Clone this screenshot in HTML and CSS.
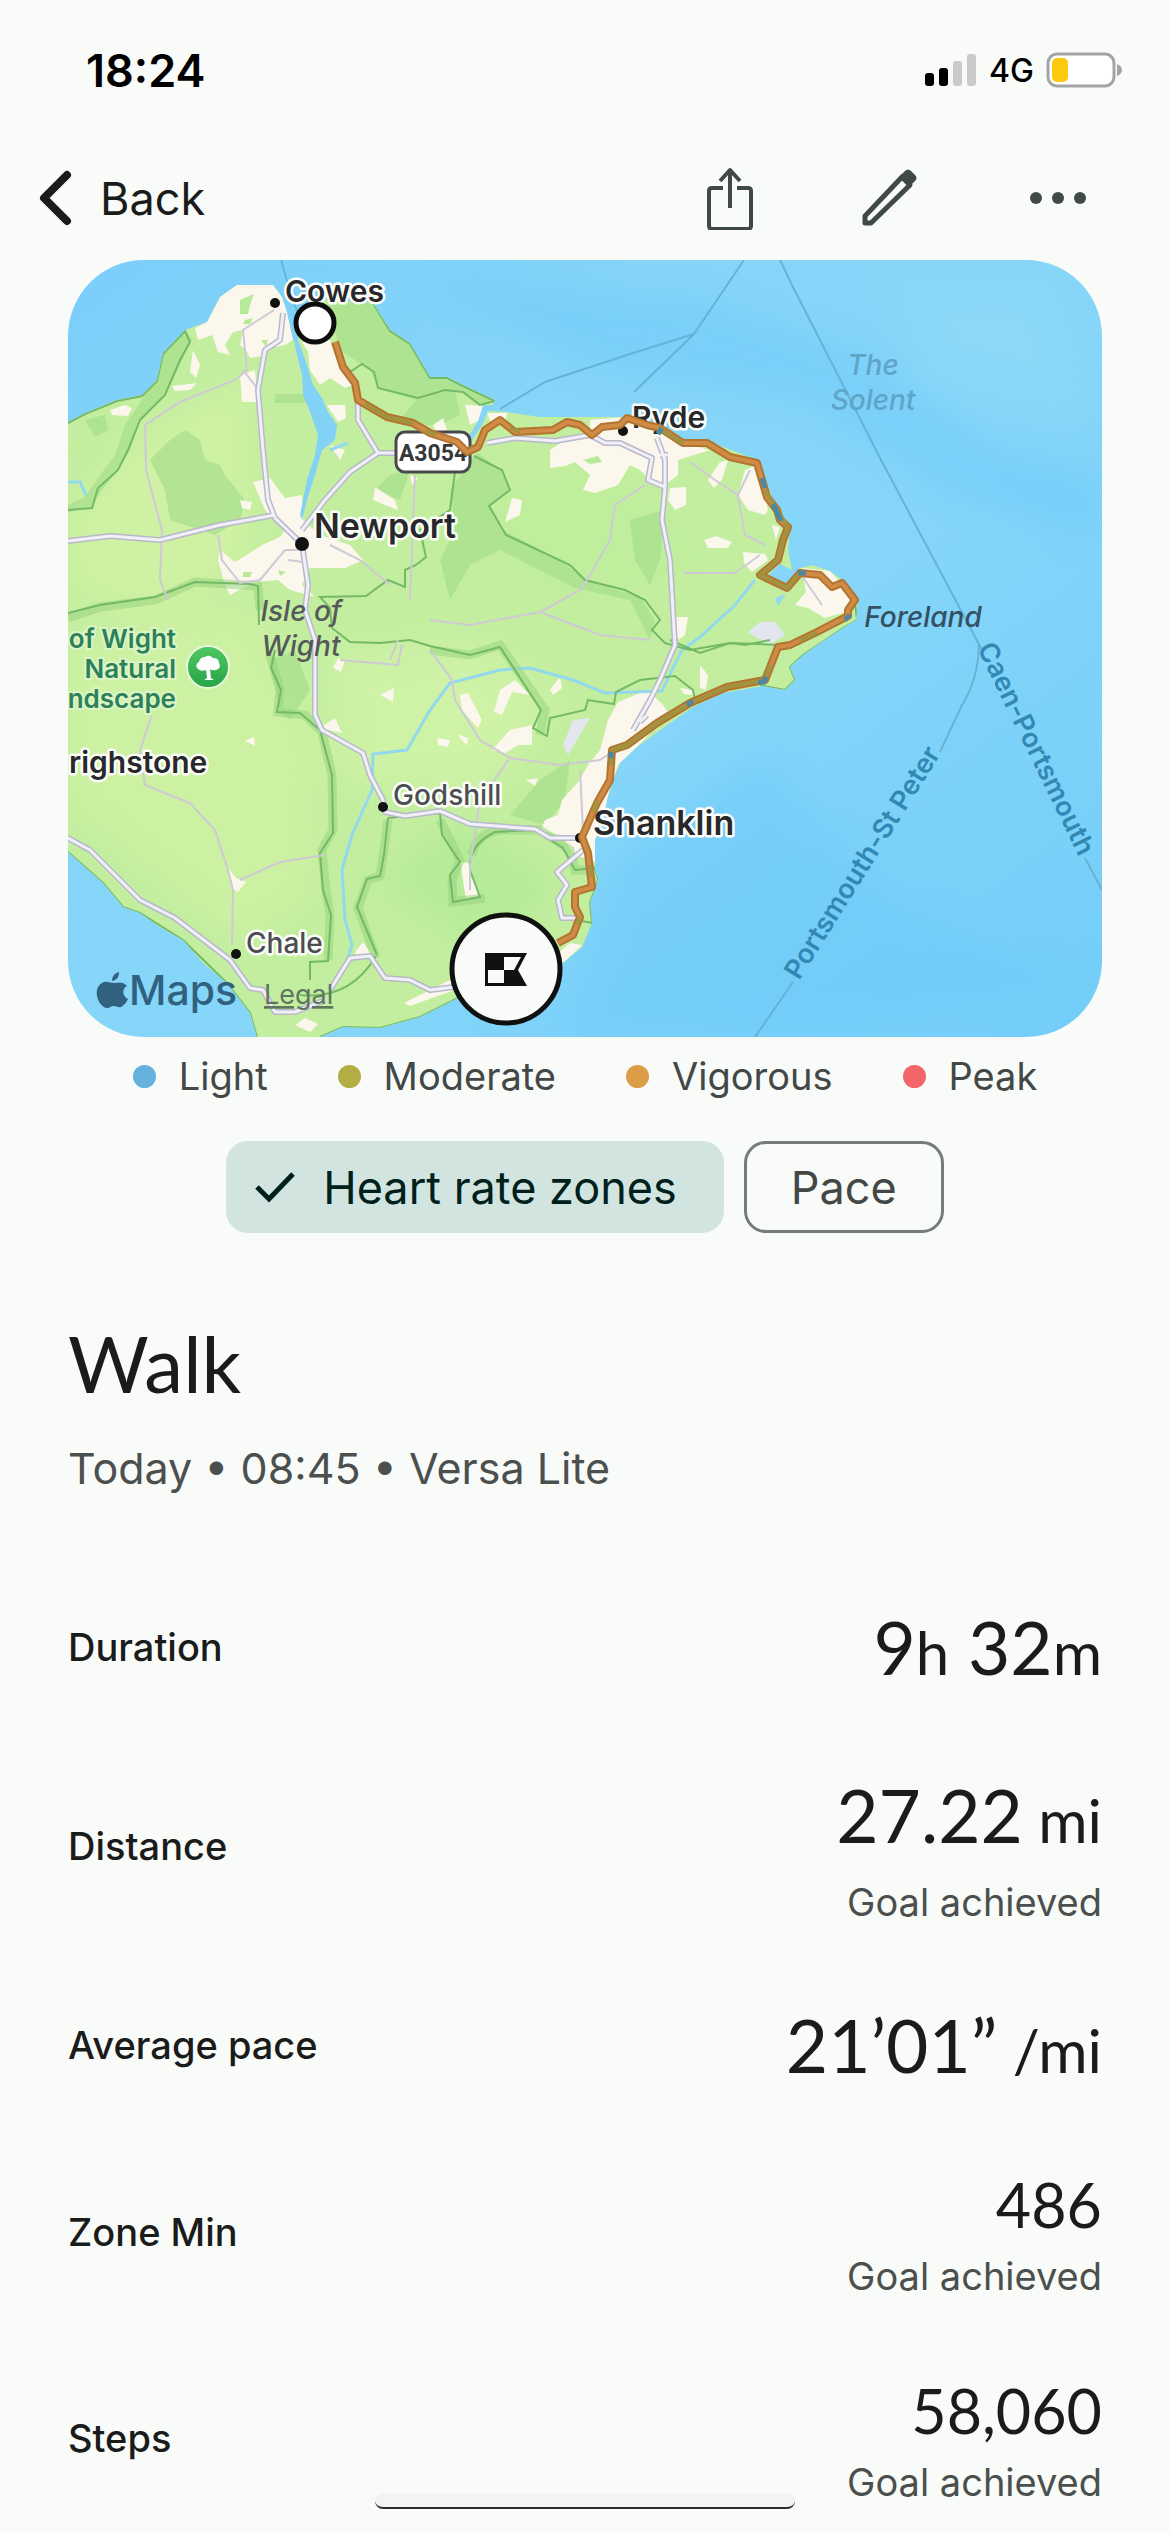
FILE: index.html
```html
<!DOCTYPE html>
<html lang="en">
<head>
    <meta charset="UTF-8">
    <meta name="viewport" content="width=device-width, initial-scale=1.0">
    <title>Walk</title>
    <link rel="stylesheet" href="styles.css">
</head>
<body>

<div class="status-bar">
    <span class="time">18:24</span>
    <div class="status-icons">
        <svg class="signal" viewBox="0 0 52 34" width="52" height="34">
            <rect x="0" y="20" width="9" height="13" rx="3"/>
            <rect x="14" y="15" width="9" height="18" rx="3"/>
            <rect x="28" y="8" width="9" height="25" rx="3" fill="#c9cbc9"/>
            <rect x="42" y="1" width="9" height="32" rx="3" fill="#c9cbc9"/>
        </svg>
        <span class="network">4G</span>
        <svg class="battery" viewBox="0 0 76 36" width="76" height="36">
            <rect x="2" y="2" width="66" height="32" rx="9" fill="#fff" stroke="#a3a5a3" stroke-width="3"/>
            <rect x="6" y="6" width="16" height="24" rx="5" fill="#fcc90c"/>
            <path d="M71 12q5 2 5 6t-5 6z" fill="#a3a5a3"/>
        </svg>
    </div>
</div>

<header class="nav-bar">
    <button class="back-btn">
        <svg viewBox="0 0 34 56" width="34" height="56" fill="none" stroke="#1a1c1b" stroke-width="8" stroke-linecap="round" stroke-linejoin="round">
            <path d="M29 5L6 28l23 23"/>
        </svg>
        Back
    </button>
    <div class="nav-actions">
        <button class="icon-btn" aria-label="Share">
            <svg viewBox="0 0 64 64" width="64" height="64" fill="none" stroke="#3f4947" stroke-width="4" stroke-linejoin="round">
                <path d="M25 22H14q-3 0-3 3v35q0 3 3 3h36q3 0 3-3V25q0-3-3-3H39"/>
                <path d="M32 42V5M22 15L32 4l10 11"/>
            </svg>
        </button>
        <button class="icon-btn" aria-label="Edit">
            <svg viewBox="6 0 64 64" width="64" height="64">
                <path d="M9 50L46 11l8 8L15 57H9z" fill="none" stroke="#3f4947" stroke-width="5" stroke-linejoin="round"/>
                <path d="M43 11l6-6q3-3 6 0l4 4q3 3 0 6l-6 6z" fill="#3f4947"/>
            </svg>
        </button>
        <button class="icon-btn" aria-label="More">
            <svg viewBox="0 0 64 64" width="64" height="64" fill="#3f4947">
                <circle cx="10" cy="32" r="6"/>
                <circle cx="32" cy="32" r="6"/>
                <circle cx="54" cy="32" r="6"/>
            </svg>
        </button>
    </div>
</header>

<main class="content">
    <div class="map">
        <svg viewBox="68 260 1034 777">
            <defs>
                <linearGradient id="sea" x1="0" y1="0" x2="1" y2="1">
                    <stop offset="0" stop-color="#7acefa"/>
                    <stop offset="0.3" stop-color="#86d5f8"/>
                    <stop offset="0.55" stop-color="#86d6f9"/>
                    <stop offset="1" stop-color="#73cdf9"/>
                </linearGradient>
                <linearGradient id="park" x1="0" y1="0" x2="0" y2="1">
                    <stop offset="0" stop-color="#4fc964"/>
                    <stop offset="1" stop-color="#26a345"/>
                </linearGradient>
                <filter id="soft" x="-20%" y="-20%" width="140%" height="140%">
                    <feGaussianBlur stdDeviation="16"/>
                </filter>
                <path id="land" d="M68 422L85 413L117 400L142 395L157 380L163 353L185 330L207 322L220 297L237 285L273 285L282 297L287 313L293 340L299 346L296 320L310 303L327 300L373 303L390 330L410 343L430 377L447 377L463 385L495 400L493 405L483 405L478 421L468 438L472 440L482 425L488 411L507 412L540 417L573 417L617 417L647 420L663 430L683 439L713 443L757 460L767 483L778 513L790 527L788 550L792 570L780 564L767 576L787 584L800 568L812 565L830 571L845 582L858 600L856 620L843 628L820 643L803 655L790 667L795 680L785 690L763 686L723 693L693 707L663 728L637 747L620 763L612 783L607 800L603 820L595 840L595 870L598 880L590 903L592 923L582 947L563 963L500 985L460 997L420 1017L380 1028L343 1027L320 1037L257 1037L250 1013L227 983L203 963L183 940L160 927L140 913L123 907L103 883L68 852Z"/>
                <clipPath id="land-clip"><use href="#land"/></clipPath>
            </defs>

            <!-- sea -->
            <rect x="68" y="260" width="1034" height="777" fill="url(#sea)"/>
            <g filter="url(#soft)" opacity="0.4">
                <path d="M420 280L700 300L860 350L1000 450L1102 480V540L940 490L800 400L600 370Z" fill="#6ac8fb"/>
                <path d="M620 860L760 760L900 900L1060 980L820 1037H560Z" fill="#6ac8fb"/>
                <path d="M880 270L1060 280L1090 420L930 380Z" fill="#93dcf6"/>
            </g>

            <!-- ferry lines -->
            <g fill="none" stroke="#66b3d6" stroke-width="2">
                <path d="M744 260L694 334L634 392M694 334L630 354L545 382L500 409"/>
                <path d="M780 260L792 285L880 458L982 650M1085 858L1102 890"/>
                <path d="M979 645Q978 680 962 705L940 752M793 982L755 1037"/>
                <path d="M281 260L288 284L300 320"/>
            </g>

            <!-- land -->
            <use href="#land" fill="#c3ee9f"/>
            <g clip-path="url(#land-clip)">
                <g filter="url(#soft)">
                    <path d="M68 520L130 440L250 380V560L160 620L68 590Z" fill="#cff1a3"/>
                    <path d="M68 640L250 600L320 740L310 900L240 940L68 800Z" fill="#cdf1a2"/>
                    <path d="M330 650L480 640L560 700L480 800L340 780Z" fill="#cef2a6"/>
                    <path d="M480 500L600 460L720 560L560 600Z" fill="#bfee9c"/>
                    <path d="M380 880L460 820L560 880L500 960Z" fill="#b5eb99"/>
                </g>

                <!-- woods and downs -->
                <g fill="#a3de8b" opacity="0.65">
                    <path d="M163 353L185 330L192 340L180 365L165 395L140 420L130 450L118 470L102 490L90 508L68 512V505L85 497L100 475L115 455L125 425L142 400Z"/>
                    <path d="M327 300L373 303L390 330L410 343L430 377L460 382L495 402L480 404L460 390L440 390L415 400L378 388L370 370L340 350Z"/>
                    <path d="M150 460L170 440L185 430L200 440L205 460L220 465L225 475L245 500L240 520L215 535L170 520L165 490Z"/>
                    <path d="M400 420L420 395L455 390L460 415L440 425L425 425Z"/>
                    <path d="M275 394L305 394V403H275Z"/>
                    <path d="M477 452L500 470L510 490L490 505L503 530L560 560L585 580L640 597L655 620L650 640L630 600L575 588L500 550L470 565L450 600L440 560L455 530L450 490Z"/>
                    <path d="M630 520L665 510L660 560L650 585L635 560Z"/>
                    <path d="M390 475L410 470L400 500L375 490Z"/>
                    <path d="M85 420L105 415L108 430L95 437Z"/>
                    <path d="M540 780L570 760L565 800L545 825L510 815Z"/>
                    <path d="M270 660L295 650L310 690L290 720L280 710Z"/>
                </g>

                <!-- built-up areas -->
                <g fill="#fbf7ec">
                    <path d="M207 322L220 297L237 283L273 283L290 310L293 340L285 345L270 348L262 356L250 358L246 350L240 345L243 330L233 332L225 345L230 355L218 352L212 335L198 340L195 328Z"/>
                    <path d="M302 342L330 340L340 365L352 385L345 388L330 378L320 385L310 370L308 352Z"/>
                    <path d="M327 405L345 405L346 418L338 422Z"/>
                    <path d="M240 375L255 370L258 402L242 402Z"/>
                    <path d="M193 350L200 365L196 378L190 372Z"/>
                    <path d="M172 386L197 383L190 390L175 391Z"/>
                    <path d="M110 410L125 405L132 408L128 416L112 415Z"/>
                    <path d="M253 482L270 478L285 498L302 495L303 520L320 535L350 545L363 560L345 568L310 568L302 585L315 597L290 590L278 580L255 582L230 595L225 585L218 560L220 550L235 562L245 556L262 545L280 537L285 530L265 510Z"/>
                    <path d="M240 500L252 502L250 510L242 508Z"/>
                    <path d="M375 487L395 500L398 510L385 505L373 500Z"/>
                    <path d="M433 425L443 418L447 430L437 434Z"/>
                    <path d="M410 475L418 478L412 485Z"/>
                    <path d="M330 445L345 450L340 460Z"/>
                    <path d="M465 405L490 406L478 421L470 425Z"/>
                    <path d="M487 413L507 413L505 425L492 425Z"/>
                    <path d="M590 420L625 417L663 430L690 445L710 450L678 460L678 475L665 485L650 480L640 470L630 465L618 485L595 493L583 490L590 475L575 462L565 466L550 468L550 450L565 440L590 435Z"/>
                    <path d="M670 488L686 487L686 505L675 510L668 500Z"/>
                    <path d="M720 462L728 460L722 480L714 488L708 480Z"/>
                    <path d="M745 470L757 465L768 510L765 515L748 510L738 495Z"/>
                    <path d="M704 540L716 536L732 542L728 548L708 548Z"/>
                    <path d="M743 552L765 554L768 560L752 572L744 563Z"/>
                    <path d="M772 525L780 527L776 540Z"/>
                    <path d="M512 498L522 500L520 515L505 522Z"/>
                    <path d="M802 568L830 571L856 600L845 612L825 618L808 608L795 605L806 592Z"/>
                    <path d="M672 617L688 617L685 635L678 640Z"/>
                    <path d="M650 692L663 705L670 715L655 728L637 747L618 765L612 783L607 800L603 820L595 840L595 862L575 855L560 835L541 830L545 820L558 815L562 800L580 780L588 765L600 750L608 720L618 702L640 693Z"/>
                    <path d="M460 695L468 693L482 720L478 728L462 710Z"/>
                    <path d="M500 690L515 680L530 695L512 692L502 715L494 712Z"/>
                    <path d="M492 750L510 730L532 725V745L518 745L505 753Z"/>
                    <path d="M550 690L560 677L562 688L553 695Z"/>
                    <path d="M437 738L450 740L448 747L438 745ZM457 734L468 738L467 746Z"/>
                    <path d="M380 695L394 688L393 702Z"/>
                    <path d="M320 728L335 718L342 733Z"/>
                    <path d="M338 658L345 660L341 672L333 668Z"/>
                    <path d="M245 741L254 737L255 746Z"/>
                    <path d="M228 868L236 878L246 882L238 892L232 888Z"/>
                    <path d="M355 952L363 942L374 958L358 960Z"/>
                    <path d="M404 1003L460 975V988L410 1006Z"/>
                    <path d="M460 862L468 863L480 895L466 900Z"/>
                    <path d="M526 780L538 778L535 786Z"/>
                    <path d="M680 688L692 690L694 695L684 694Z"/>
                    <path d="M700 665L708 675L706 690L700 688Z"/>
                    <path d="M563 963L582 945L570 943L556 955Z"/>
                    <path d="M295 1025L305 1018L318 1024L310 1032Z"/>
                </g>
                <g fill="#b6e998">
                    <path d="M240 300L254 294L250 305L248 314L240 314ZM245 320L253 318L250 324L243 324ZM261 340L268 340L266 347Z"/>
                    <path d="M583 460L598 456L602 462L590 464Z"/>
                    <path d="M243 572L252 572L250 577L243 577ZM278 570L286 572L280 576Z"/>
                </g>
                <path d="M760 622L775 622L785 635L770 645L748 632ZM573 720L590 718L580 735L568 755L563 745Z" fill="#e3e6ee"/>

                <!-- rivers -->
                <path d="M293 335L300 345L308 368L313 385L322 398L328 412L337 425L335 440L322 450L315 475L307 500L302 520L300 515L307 480L315 455L318 435L310 412L303 395L302 375L297 355Z" fill="#82d2f5"/>
                <path d="M488 411L478 421L470 437L460 448L478 430Z" fill="#82d2f5"/>
                <g fill="none" stroke="#93d9ee" stroke-width="3">
                    <path d="M330 450L348 443M68 482L80 482L86 495"/>
                    <path d="M755 580L735 605L700 637L682 650L672 670L662 691L605 693L573 680L530 668L500 670L450 683L430 710L407 750L373 754L372 790L352 835L342 870L345 920L352 945L348 958"/>
                </g>
                <path d="M775 598L786 594L778 606Z" fill="#93d9ee"/>

                <!-- area outlines -->
                <g fill="none" stroke="#98d580" stroke-width="9" opacity="0.55">
                    <path d="M68 618L100 607L155 600L195 582L258 586L260 610"/>
                    <path d="M270 655L280 690L278 712L305 715L322 732L332 775L333 830L322 850L326 890L330 915L328 960"/>
                    <path d="M388 820L384 850L380 876L368 880L358 908L376 958"/>
                    <path d="M440 820L460 860L452 880L453 902L485 898M472 855Q475 835 500 830L540 830L570 850L575 870L595 870"/>
                    <path d="M430 650L470 655L500 645L545 710L540 735"/>
                </g>
                <g fill="none" stroke="#74b968" stroke-width="2">
                    <path d="M68 423L85 414L117 401L142 396L157 381L163 354L185 331L190 342L180 360L165 395L140 420L128 450L118 470L98 488L92 508L68 510"/>
                    <path d="M373 303L390 331L410 344L430 378L447 378L463 386L495 401L480 405L463 392L445 390L418 398L378 388L374 372L362 364L350 372"/>
                    <path d="M68 613L100 605L155 597L195 582L250 584L258 586L259 625"/>
                    <path d="M474 456L502 470L510 490L489 506L506 535L570 565L585 580L625 590L645 600L660 620L652 630L665 643L690 650L730 643L780 645"/>
                    <path d="M455 472L450 510L420 530L426 557L416 565L405 570L405 587L388 580L366 596L320 597L330 608L332 628L350 642L380 643L410 640L430 646L470 655L500 647L541 710L533 728L547 736L550 718L585 710L588 700L614 704L616 692L640 680L675 676L693 690L695 700"/>
                    <path d="M275 650L271 668L281 690L277 712L300 713L320 730L332 775L333 833L320 853L323 890L331 915L328 961L310 962L310 980"/>
                    <path d="M388 818L384 855L380 876L367 879L357 907L377 955M388 818L440 813L442 835L460 862L450 875L453 902L480 897L470 870Q468 845 495 832L535 830L563 848L575 870L595 868L598 880L590 903L592 923L577 920"/>
                    <path d="M760 685L785 690L795 680L790 667L803 655L843 628L857 620L855 603"/>
                    <path d="M68 852L103 883L123 907L140 913L183 940L227 983L250 1013L257 1037M320 1037L343 1027L380 1028L420 1017L470 992"/>
                    <path d="M376 956Q350 1000 300 995M670 640L700 653L730 643L745 645L770 640"/>
                </g>

                <!-- minor roads -->
                <g fill="none" stroke="#cfc9d6" stroke-width="2">
                    <path d="M274 310L243 330L247 370L235 380L180 402L145 425L146 470L162 530L160 580L168 600"/>
                    <path d="M243 370L257 388M218 535L222 560L240 583L260 580L285 550L298 550M288 560L303 562"/>
                    <path d="M152 715L140 750L145 785L190 803L215 830L228 870L233 890L232 945M240 880L280 862L325 855"/>
                    <path d="M430 620L470 625L540 612L580 590L590 575L610 540L615 505L645 485"/>
                    <path d="M540 612L600 635L650 640M684 573L735 573L760 555M738 495L745 535L765 545M750 470L738 495L715 480L690 462"/>
                    <path d="M430 650L452 680L455 700L480 740L510 758L560 765L600 760L612 752M510 758L480 800L470 865L470 890M580 770L583 830"/>
                    <path d="M330 545L360 560L390 585M390 660L398 640M340 660L398 665L402 645M415 475L410 600M800 573L822 605"/>
                </g>
                <!-- main roads -->
                <g fill="none" stroke="#b9b8cb" stroke-width="6" stroke-linejoin="round">
                    <path d="M283 313L280 340L265 350L258 390L263 450L268 500L275 518L302 544L308 585L305 610L315 640V715L322 730L363 753L370 775L383 800L385 812L405 816L440 811L470 824L535 829L550 838L580 838"/>
                    <path d="M68 541L110 536L160 540L220 525L275 515M302 530L325 500L350 472L378 453L400 453M378 453L358 420L358 400"/>
                    <path d="M487 443L515 438L555 441L590 435L605 443L620 443L652 458L648 480L665 487M657 438L665 460V487L662 520L670 560L675 645L660 680L650 700L633 730M647 715L640 722M668 455H660"/>
                    <path d="M68 838L90 850L140 900L175 918L230 960L250 988L263 990L275 1012L295 1012L325 1000M330 990L350 958L370 956L385 978L410 980L430 990L470 985"/>
                    <path d="M583 850L557 872L567 885L558 900L562 918L580 918"/>
                </g>
                <g fill="none" stroke="#f0f0f8" stroke-width="3" stroke-linejoin="round">
                    <path d="M283 313L280 340L265 350L258 390L263 450L268 500L275 518L302 544L308 585L305 610L315 640V715L322 730L363 753L370 775L383 800L385 812L405 816L440 811L470 824L535 829L550 838L580 838"/>
                    <path d="M68 541L110 536L160 540L220 525L275 515M302 530L325 500L350 472L378 453L400 453M378 453L358 420L358 400"/>
                    <path d="M487 443L515 438L555 441L590 435L605 443L620 443L652 458L648 480L665 487M657 438L665 460V487L662 520L670 560L675 645L660 680L650 700L633 730M647 715L640 722M668 455H660"/>
                    <path d="M68 838L90 850L140 900L175 918L230 960L250 988L263 990L275 1012L295 1012L325 1000M330 990L350 958L370 956L385 978L410 980L430 990L470 985"/>
                    <path d="M583 850L557 872L567 885L558 900L562 918L580 918"/>
                </g>
            </g>

            <!-- road shield -->
            <rect x="396" y="432" width="74" height="40" rx="9" fill="#fff" stroke="#47494d" stroke-width="3"/>
            <text class="shield" x="433" y="461">A3054</text>

            <!-- places -->
            <g fill="#111">
                <circle cx="275" cy="303" r="5"/>
                <circle cx="302" cy="544" r="7"/>
                <circle cx="623" cy="431" r="5"/>
                <circle cx="383" cy="807" r="5"/>
                <circle cx="580" cy="838" r="5"/>
                <circle cx="236" cy="954" r="5"/>
            </g>
            <text class="town" x="285" y="302">Cowes</text>
            <text class="town" x="632" y="428">Ryde</text>
            <text class="town town-large" x="314" y="538">Newport</text>
            <text class="town town-large" x="593" y="835">Shanklin</text>
            <text class="town" x="69" y="773">righstone</text>
            <text class="town village" x="393" y="805">Godshill</text>
            <text class="town village" x="246" y="953">Chale</text>
            <text class="region" x="301" y="621">Isle of</text>
            <text class="region" x="301" y="656">Wight</text>
            <text class="region cape" x="923" y="627">Foreland</text>
            <text class="water" x="873" y="375">The</text>
            <text class="water" x="873" y="410">Solent</text>
            <text class="nature" x="176" y="648">of Wight</text>
            <text class="nature" x="176" y="678">Natural</text>
            <text class="nature" x="176" y="708">ndscape</text>
            <text class="ferry" transform="translate(799 981) rotate(-58)">Portsmouth-St Peter</text>
            <text class="ferry" transform="translate(977 648) rotate(64)">Caen-Portsmouth</text>

            <circle cx="208" cy="667" r="21" fill="url(#park)" stroke="#e9f7de" stroke-width="2"/>
            <path d="M206 670q-5 2-8-1q-4-4 1-7q1-5 6-5q4-3 8 1q6 0 6 5q3 5-3 7q-4 1-6-1l1 9l3 2h-10l3-2z" fill="#fff"/>

            <!-- track, coloured by heart rate zone -->
            <path class="route-edge" d="M335 342L343 367L355 383L358 400L387 417L413 423L430 433L457 442L467 452L478 447L485 430L500 420L515 432L553 430L567 422L580 425L592 435L602 427L620 425L627 418L647 425L660 428L683 443L707 443L730 457L757 463L762 480L767 497L777 510L780 520L788 527L783 540L778 560L760 575L787 588L800 573L820 575L832 587L842 583L855 600L848 610V616L817 632L790 645L778 647L765 680L727 687L690 703L657 723L627 745L612 750L610 780L597 803L582 837L588 853L592 887L575 892L575 907L580 917L573 935L558 943"/>
            <path class="route-vigorous" d="M335 342L343 367L355 383L358 400L387 417L413 423L430 433L457 442L467 452L478 447L485 430L500 420L515 432L553 430L567 422L580 425L592 435L602 427L620 425L627 418L647 425L660 428L683 443L707 443L730 457L757 463L762 480L767 497L777 510L780 520L788 527L783 540L778 560L760 575L787 588L800 573L820 575L832 587L842 583L855 600L848 610V616L817 632L790 645L778 647L765 680L727 687L690 703L657 723L627 745L612 750L610 780L597 803L582 837L588 853L592 887L575 892L575 907L580 917L573 935L558 943"/>
            <path class="route-moderate" d="M365 404L387 417L413 423M425 431L436 435M510 428L520 432M658 428L683 443M765 490L777 510L788 527L783 540L778 560L760 575L787 588L798 575M817 632L800 641M770 665L765 680L727 687L690 703L657 723L627 745L612 750L611 765M597 800L594 812M590 865L592 877M580 917L577 925"/>
            <path class="route-light" d="M762 478L765 488M773 504L781 521M766 677L764 682L758 682M693 701L687 705M611 752L611 758M798 573H806M845 620L850 615M662 428L658 434"/>

            <circle cx="315" cy="323" r="19" fill="#fff" stroke="#0c0c0c" stroke-width="5"/>
            <circle cx="506" cy="969" r="54" fill="#f9fbf8" stroke="#0f1110" stroke-width="5"/>
            <path d="M485 953h42l-9 17l9 16h-42z" fill="#101211"/>
            <path d="M504 957h17l-7 13h-10zM488 970h16v13h-16z" fill="#f9fbf8"/>

            <!-- attribution -->
            <g fill="#30617f">
                <path d="M115 983C110 983 108 981 104 982C98 984 96 990 97 996C98 1002 103 1008 107 1008C110 1008 111 1006 114 1006C117 1006 118 1008 121 1007C124 1006 127 1001 128 999C123 997 121 989 127 986C124 982 119 982 115 983Z"/>
                <path d="M112 981C112 976 115 973 119 972C119 977 117 980 112 981Z"/>
            </g>
            <text class="maps-logo" x="129" y="1005">Maps</text>
            <a href="#legal"><text class="legal" x="264" y="1004">Legal</text></a>
        </svg>
    </div>

    <ul class="legend">
        <li><span class="dot light"></span>Light</li>
        <li><span class="dot moderate"></span>Moderate</li>
        <li><span class="dot vigorous"></span>Vigorous</li>
        <li><span class="dot peak"></span>Peak</li>
    </ul>

    <div class="chips">
        <button class="chip selected" aria-pressed="true">
            <svg viewBox="0 0 40 32" width="40" height="32" fill="none" stroke="#00201c" stroke-width="5">
                <path d="M2 16l12 12L38 3"/>
            </svg>
            Heart rate zones
        </button>
        <button class="chip" aria-pressed="false">Pace</button>
    </div>

    <h1>Walk</h1>
    <p class="subtitle">Today • 08:45 • Versa Lite</p>

    <dl class="stats">
        <div class="stat">
            <dt>Duration</dt>
            <dd><span class="value">9<small>h</small> 32<small>m</small></span></dd>
        </div>
        <div class="stat">
            <dt>Distance</dt>
            <dd><span class="value">27.22<small> mi</small></span><span class="goal">Goal achieved</span></dd>
        </div>
        <div class="stat">
            <dt>Average pace</dt>
            <dd><span class="value">21’01”<small> /mi</small></span></dd>
        </div>
        <div class="stat">
            <dt>Zone Min</dt>
            <dd><span class="value value-small">486</span><span class="goal">Goal achieved</span></dd>
        </div>
        <div class="stat">
            <dt>Steps</dt>
            <dd><span class="value value-small">58,060</span><span class="goal">Goal achieved</span></dd>
        </div>
    </dl>
</main>

<div class="home-indicator"></div>

</body>
</html>
```
FILE: styles.css
```css
* {
    box-sizing: border-box;
}
body {
    margin: 0;
    font-family: Inter, "Liberation Sans", sans-serif;
    background-color: #f9fbf8;
    color: #1a1c1b;
}
button {
    padding: 0;
    border: none;
    background: none;
    font-family: inherit;
    color: inherit;
    cursor: pointer;
}
svg {
    display: block;
}
.status-bar {
    display: flex;
    justify-content: space-between;
    align-items: center;
    height: 140px;
    padding: 0 48px 0 86px;
    color: #000;
}
.time {
    font-size: 45px;
    font-weight: 600;
}
.status-icons {
    display: flex;
    align-items: center;
    gap: 12px;
}
.network {
    font-size: 32px;
    font-weight: 500;
}
.nav-bar {
    display: flex;
    justify-content: space-between;
    align-items: center;
    height: 120px;
    padding: 0 74px 4px 38px;
}
.back-btn {
    display: flex;
    align-items: center;
    gap: 28px;
    font-size: 45px;
}
.nav-actions {
    display: flex;
    gap: 94px;
}
.icon-btn {
    width: 70px;
}
.content {
    padding: 0 68px;
}
.map {
    border-radius: 76px;
    overflow: hidden;
}
.map svg {
    width: 100%;
}

/* map labels */
.map text {
    font-family: Inter, "Liberation Sans", sans-serif;
}
.town {
    font-size: 30px;
    font-weight: 600;
    fill: #26282b;
    stroke: #fcfdf8;
    stroke-width: 5px;
    stroke-linejoin: round;
    paint-order: stroke;
}
.town-large {
    font-size: 34px;
}
.village {
    font-size: 28px;
    font-weight: 500;
    fill: #4b4d50;
}
.region, .water {
    font-size: 28px;
    font-style: italic;
    font-weight: 500;
    text-anchor: middle;
    fill: #55595a;
}
.cape {
    fill: #345062;
}
.water {
    fill: #5ea5c8;
}
.nature {
    font-size: 26px;
    font-weight: 600;
    text-anchor: end;
    fill: #2c8158;
    stroke: #dcf5c6;
    stroke-width: 4px;
    paint-order: stroke;
}
.ferry {
    font-size: 27px;
    font-weight: 600;
    fill: #3288b3;
}
.map .shield {
    font-family: "Liberation Sans Narrow", Roboto, sans-serif;
    font-size: 23px;
    font-weight: 700;
    text-anchor: middle;
    fill: #35373a;
}
.maps-logo {
    font-size: 41px;
    font-weight: 500;
    fill: #30617f;
}
.legal {
    font-size: 27px;
    fill: #5f7560;
    text-decoration: underline;
}
.route-edge, .route-vigorous, .route-moderate, .route-light {
    fill: none;
    stroke-linejoin: round;
}
.route-edge {
    stroke: #b2752f;
    stroke-width: 8px;
}
.route-vigorous {
    stroke: #d08b46;
    stroke-width: 4px;
}
.route-moderate {
    stroke: #a19340;
    stroke-width: 4px;
}
.route-light {
    stroke: #4d88a0;
    stroke-width: 5px;
}

.legend {
    display: flex;
    justify-content: center;
    gap: 70px;
    margin: 15px 0 0;
    padding: 0;
    list-style: none;
    font-size: 38px;
    line-height: 48px;
    color: #434846;
}
.legend li {
    display: flex;
    align-items: center;
    gap: 23px;
}
.dot {
    width: 23px;
    height: 23px;
    border-radius: 50%;
}
.light {
    background-color: #64b1de;
}
.moderate {
    background-color: #b2ae43;
}
.vigorous {
    background-color: #dd9d47;
}
.peak {
    background-color: #f26669;
}

.chips {
    display: flex;
    justify-content: center;
    gap: 20px;
    margin-top: 41px;
}
.chip {
    display: flex;
    align-items: center;
    gap: 28px;
    height: 92px;
    padding: 0 44px;
    border: 3px solid #767b79;
    border-radius: 22px;
    font-size: 45px;
    color: #434846;
}
.chip.selected {
    padding: 0 44px 0 26px;
    border-color: #d1e4df;
    background-color: #d1e4df;
    color: #00201c;
}

h1 {
    margin: 78px 0 0;
    font-family: Lato, sans-serif;
    font-size: 78px;
    font-weight: 400;
    line-height: 104px;
}
.subtitle {
    margin: 25px 0 0;
    font-size: 43px;
    line-height: 56px;
    color: #4b504e;
}

.stats {
    margin: 67px 0 0;
}
.stat {
    display: flex;
    justify-content: space-between;
    align-items: center;
    padding: 42px 0;
}
.stat:last-child {
    padding-bottom: 0;
}
.stat dt {
    font-size: 38px;
    font-weight: 500;
}
.stat dd {
    margin: 0;
    text-align: right;
}
.value, .goal {
    display: block;
}
.value {
    font-family: Lato, sans-serif;
    font-size: 73px;
    line-height: 84px;
}
.value small {
    font-size: 60px;
    line-height: 60px;
}
.goal {
    margin-top: 28px;
    font-size: 38px;
    line-height: 34px;
    color: #4b504e;
}
.value-small {
    font-size: 61px;
    line-height: 68px;
}
.value-small + .goal {
    margin-top: 20px;
}
.home-indicator {
    position: fixed;
    left: 50%;
    bottom: 23px;
    width: 420px;
    height: 16px;
    margin-left: -210px;
    border-bottom: 2px solid #2b2b2b;
    border-radius: 8px;
    background-color: #f3f3f3;
}
```
